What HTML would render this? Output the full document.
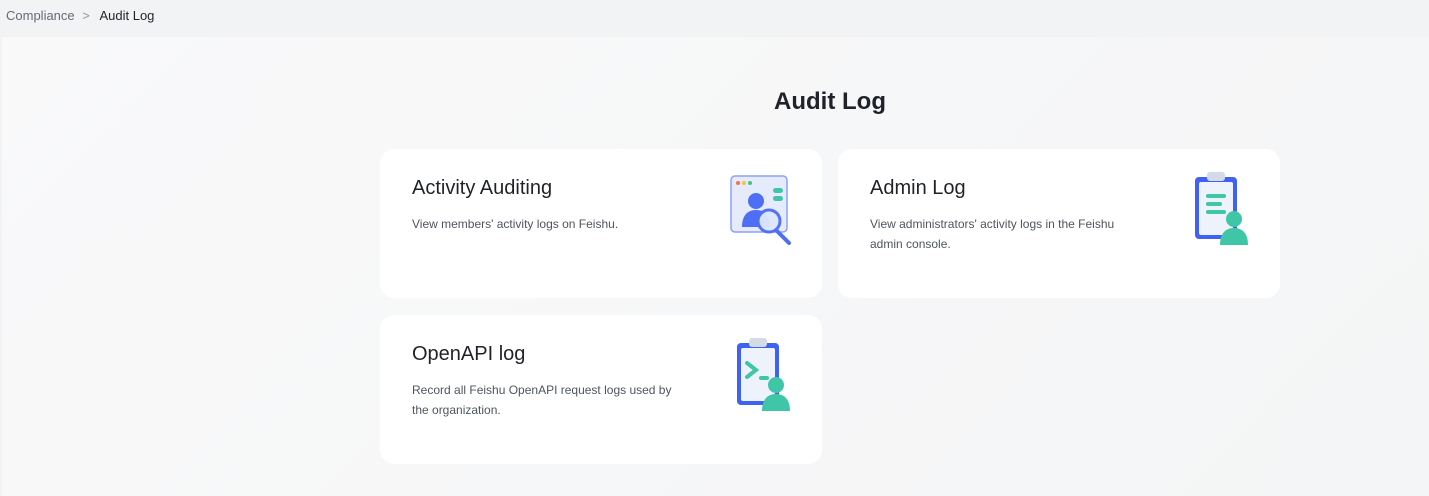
<!DOCTYPE html>
<html><head><meta charset="utf-8"><style>
*{margin:0;padding:0;box-sizing:border-box}
body{width:1429px;height:496px;background:#f2f3f5;font-family:"Liberation Sans",sans-serif;overflow:hidden;position:relative}
.bc{position:absolute;left:6px;top:8px;font-size:13px;color:#646a73}
.bc b{font-weight:normal;color:#1f2329;margin-left:6px}
.bc i{font-style:normal;color:#8f959e;margin-left:4px}
.main{position:absolute;left:2px;top:37px;width:1427px;height:459px;background:linear-gradient(135deg,#f9f9fa,#f4f5f6)}
h1{position:absolute;left:0;width:1660px;text-align:center;top:88px;font-size:24px;color:#1f2329}
.card{position:absolute;width:442px;height:149px;background:#fff;border-radius:14px}
.card h2{position:absolute;left:32px;top:28px;font-size:20px;font-weight:normal;color:#1f2329}
.card p{position:absolute;left:32px;top:65px;width:262px;font-size:12px;line-height:20px;color:#4e5560}
.card svg{position:absolute}
</style></head><body>
<div class="bc">Compliance <i>&gt;</i> <b>Audit Log</b></div>
<div class="main"></div>
<h1>Audit Log</h1>
<div class="card" style="left:380px;top:149px"><h2>Activity Auditing</h2><p>View members' activity logs on Feishu.</p>
<svg style="left:345px;top:22px" width="70" height="78" viewBox="0 0 70 78"><rect x="6" y="5" width="56" height="56" rx="4" fill="#e6ebfb" stroke="#8aa2f5" stroke-width="1.5"/><circle cx="13" cy="12" r="2" fill="#f5744a"/><circle cx="19" cy="12" r="2" fill="#f7c33a"/><circle cx="25" cy="12" r="2" fill="#3bc48a"/><rect x="48" y="17" width="10" height="5" rx="2.5" fill="#3fc6a6"/><rect x="48" y="25" width="10" height="5" rx="2.5" fill="#3fc6a6"/><circle cx="31" cy="30" r="8" fill="#4d6ef5"/><path d="M17 56c0-12 6-17 14-17s14 5 14 17z" fill="#4d6ef5"/><line x1="52" y1="60" x2="64" y2="72" stroke="#4d6ef5" stroke-width="4" stroke-linecap="round"/><circle cx="44" cy="50" r="11" fill="#dfe7ff" stroke="#4d6ef5" stroke-width="3" opacity=".95"/></svg></div>
<div class="card" style="left:838px;top:149px"><h2>Admin Log</h2><p>View administrators' activity logs in the Feishu admin console.</p>
<svg style="left:352px;top:20px" width="62" height="80" viewBox="0 0 62 80"><rect x="5" y="8" width="42" height="62" rx="4" fill="#3f62f2"/><rect x="9" y="13" width="34" height="53" rx="2" fill="#eef2fb"/><rect x="17" y="3" width="18" height="9" rx="3" fill="#d4dae6"/><rect x="16" y="25" width="20" height="4" rx="2" fill="#3fc6a6"/><rect x="16" y="33" width="16" height="4" rx="2" fill="#3fc6a6"/><rect x="16" y="41" width="20" height="4" rx="2" fill="#3fc6a6"/><circle cx="44" cy="50" r="8" fill="#3fc6a6"/><path d="M30 76c0-12 6-17 14-17s14 5 14 17z" fill="#3fc6a6"/></svg></div>
<div class="card" style="left:380px;top:315px"><h2>OpenAPI log</h2><p>Record all Feishu OpenAPI request logs used by the organization.</p>
<svg style="left:352px;top:20px" width="62" height="80" viewBox="0 0 62 80"><rect x="5" y="8" width="42" height="62" rx="4" fill="#3f62f2"/><rect x="9" y="13" width="34" height="53" rx="2" fill="#eef2fb"/><rect x="17" y="3" width="18" height="9" rx="3" fill="#d4dae6"/><path d="M15 28l9 7-9 7" stroke="#3fc6a6" stroke-width="4" fill="none" stroke-linecap="round"/><rect x="27" y="41" width="10" height="4" rx="2" fill="#3fc6a6"/><circle cx="44" cy="50" r="8" fill="#3fc6a6"/><path d="M30 76c0-12 6-17 14-17s14 5 14 17z" fill="#3fc6a6"/></svg></div>
</body></html>
